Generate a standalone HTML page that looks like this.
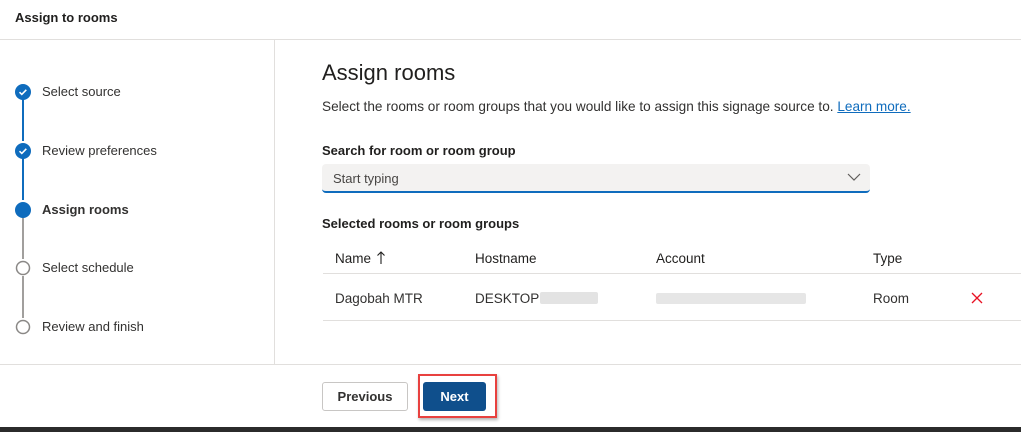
<!DOCTYPE html>
<html><head><style>
*{margin:0;padding:0;box-sizing:border-box}
body{width:1021px;height:432px;background:#fff;font-family:"Liberation Sans",sans-serif;color:#323130;position:relative;overflow:hidden}
.a{position:absolute;white-space:nowrap}
.t{font-size:13px}
</style></head><body>
<div class="a" style="left:15px;top:10px;font-size:13px;font-weight:bold;color:#201f1e">Assign to rooms</div>
<div class="a" style="left:0;top:39px;width:1021px;height:1px;background:#e1dfdd"></div>
<div class="a" style="left:274px;top:40px;width:1px;height:324px;background:#e1dfdd"></div>
<div class="a" style="left:0;top:364px;width:1021px;height:1px;background:#e1dfdd"></div>
<div class="a" style="left:0;top:427px;width:1021px;height:5px;background:#2b2b2b"></div>

<div class="a" style="left:22px;top:99px;width:2px;height:42px;background:#0f6cbd"></div>
<div class="a" style="left:22px;top:158px;width:2px;height:42px;background:#0f6cbd"></div>
<div class="a" style="left:22px;top:217px;width:2px;height:42px;background:#a19f9d"></div>
<div class="a" style="left:22px;top:276px;width:2px;height:42px;background:#a19f9d"></div>
<svg class="a" style="left:14px;top:83px" width="18" height="18"><circle cx="9" cy="9" r="8" fill="#0f6cbd"/><path d="M5.5 9.2l2.3 2.2 4.5-4.6" stroke="#fff" stroke-width="1.6" fill="none"/></svg>
<svg class="a" style="left:14px;top:142px" width="18" height="18"><circle cx="9" cy="9" r="8" fill="#0f6cbd"/><path d="M5.5 9.2l2.3 2.2 4.5-4.6" stroke="#fff" stroke-width="1.6" fill="none"/></svg>
<svg class="a" style="left:14px;top:201px" width="18" height="18"><circle cx="9" cy="9" r="8" fill="#0f6cbd"/></svg>
<svg class="a" style="left:14px;top:259px" width="18" height="18"><circle cx="9" cy="9" r="6.5" fill="#fff" stroke="#8a8886" stroke-width="1.5"/></svg>
<svg class="a" style="left:14px;top:318px" width="18" height="18"><circle cx="9" cy="9" r="6.5" fill="#fff" stroke="#8a8886" stroke-width="1.5"/></svg>
<div class="a t" style="left:42px;top:84px">Select source</div>
<div class="a t" style="left:42px;top:143px">Review preferences</div>
<div class="a t" style="left:42px;top:202px;font-weight:bold">Assign rooms</div>
<div class="a t" style="left:42px;top:260px">Select schedule</div>
<div class="a t" style="left:42px;top:319px">Review and finish</div>

<div class="a" style="left:322px;top:60px;font-size:22px;color:#201f1e">Assign rooms</div>
<div class="a" style="left:322px;top:99px;font-size:13.6px">Select the rooms or room groups that you would like to assign this signage source to. <span style="color:#0f6cbd;text-decoration:underline">Learn more.</span></div>
<div class="a t" style="left:322px;top:143px;font-weight:bold;color:#201f1e">Search for room or room group</div>
<div class="a" style="left:322px;top:164px;width:548px;height:29px;background:#f3f2f1;border-radius:4px;border-bottom:2px solid #0f6cbd"></div>
<div class="a t" style="left:333px;top:171px;color:#484644">Start typing</div>
<svg class="a" style="left:847px;top:172px" width="14" height="10"><path d="M1 2l6 6 6-6" stroke="#605e5c" stroke-width="1.2" fill="none"/></svg>
<div class="a t" style="left:322px;top:216px;font-weight:bold;color:#201f1e">Selected rooms or room groups</div>
<div class="a" style="left:335px;top:251px;font-size:13.5px;color:#201f1e">Name</div>
<svg class="a" style="left:376px;top:251px" width="10" height="14"><path d="M5 1v12M1.5 4.5L5 1l3.5 3.5" stroke="#201f1e" stroke-width="1.1" fill="none"/></svg>
<div class="a" style="left:475px;top:251px;font-size:13.5px;color:#201f1e">Hostname</div>
<div class="a" style="left:656px;top:251px;font-size:13.5px;color:#201f1e">Account</div>
<div class="a" style="left:873px;top:251px;font-size:13.5px;color:#201f1e">Type</div>
<div class="a" style="left:323px;top:273px;width:698px;height:1px;background:#e1dfdd"></div>
<div class="a" style="left:335px;top:291px;font-size:13.5px">Dagobah MTR</div>
<div class="a" style="left:475px;top:291px;font-size:13.5px">DESKTOP</div>
<div class="a" style="left:540px;top:292px;width:58px;height:12px;background:#e3e3e3;border-radius:2px"></div>
<div class="a" style="left:656px;top:293px;width:150px;height:11px;background:#e6e6e6;border-radius:2px"></div>
<div class="a" style="left:873px;top:291px;font-size:13.5px">Room</div>
<svg class="a" style="left:970px;top:291px" width="14" height="14"><path d="M2 2l10 10M12 2L2 12" stroke="#e81123" stroke-width="1.3"/></svg>
<div class="a" style="left:323px;top:320px;width:698px;height:1px;background:#e1dfdd"></div>

<div class="a" style="left:322px;top:382px;width:86px;height:29px;border:1px solid #c8c6c4;border-radius:3px;text-align:center;line-height:27px;font-size:13px;font-weight:bold">Previous</div>
<div class="a" style="left:418px;top:374px;width:79px;height:44px;border:2px solid #e8413f;box-shadow:1px 2px 3px rgba(0,0,0,.3)"></div>
<div class="a" style="left:423px;top:382px;width:63px;height:29px;background:#0f4f8c;border-radius:3px;color:#fff;text-align:center;line-height:29px;font-size:13px;font-weight:bold">Next</div>
</body></html>
